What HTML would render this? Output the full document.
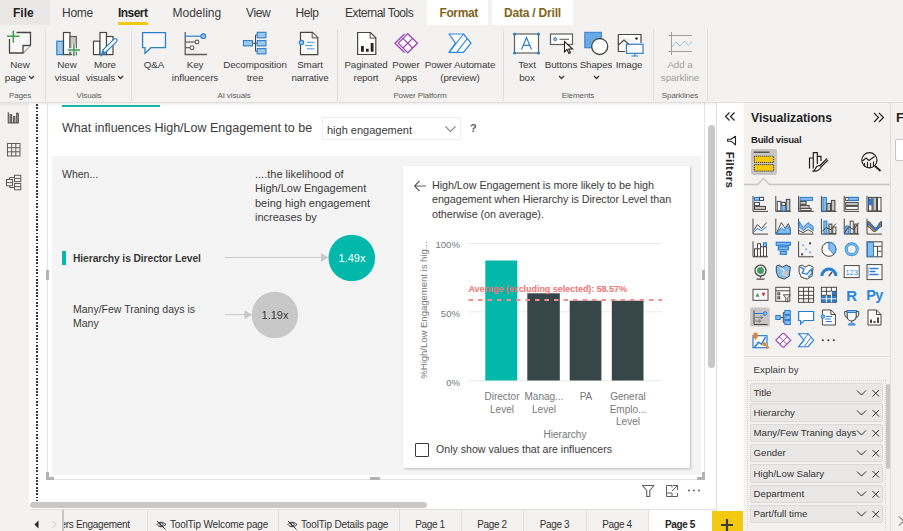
<!DOCTYPE html>
<html><head><meta charset="utf-8">
<style>
*{box-sizing:border-box;margin:0;padding:0}
html,body{width:903px;height:531px;overflow:hidden;background:#f3f2f1;font-family:"Liberation Sans",sans-serif;color:#252423;position:relative}
.a{position:absolute}
.t{position:absolute;white-space:nowrap}
.tab{position:absolute;top:0;height:25px;line-height:26px;font-size:12px;color:#3b3a39;white-space:nowrap}
.rb{position:absolute;font-size:9.8px;letter-spacing:-0.1px;color:#3b3a39;text-align:center;line-height:13px;white-space:nowrap}
.chev{display:inline-block;width:7px;height:5px;margin-left:2px;vertical-align:1px}
.gl{position:absolute;top:91.3px;font-size:8.1px;letter-spacing:-0.15px;color:#605e5c;text-align:center;white-space:nowrap}
.sep{position:absolute;top:29px;width:1px;height:72px;background:#e1dfdd}
</style></head><body>
<!-- tab row -->
<div class="a" style="left:0;top:0;width:50px;height:25px;background:#e9e8e6"></div>
<div class="tab" style="left:13px;color:#252423;font-weight:bold">File</div>
<div class="tab" style="left:62px;letter-spacing:-0.25px">Home</div>
<div class="tab" style="left:118px;color:#252423;font-weight:bold;letter-spacing:-0.55px">Insert</div>
<div class="a" style="left:118px;top:22px;width:30px;height:2.5px;background:#f2c811"></div>
<div class="tab" style="left:172.5px">Modeling</div>
<div class="tab" style="left:246px;letter-spacing:-0.4px">View</div>
<div class="tab" style="left:295.5px;letter-spacing:-0.4px">Help</div>
<div class="tab" style="left:345px;letter-spacing:-0.5px">External Tools</div>
<div class="a" style="left:427px;top:0;width:61px;height:25px;background:#fff"></div>
<div class="tab" style="left:439.5px;color:#7f6520;font-weight:bold;letter-spacing:-0.4px">Format</div>
<div class="a" style="left:492px;top:0;width:81px;height:25px;background:#fff"></div>
<div class="tab" style="left:504px;color:#7f6520;font-weight:bold;letter-spacing:-0.2px">Data / Drill</div>

<svg class="a" style="left:0;top:0" width="903" height="103" viewBox="0 0 903 103">
<g fill="none" stroke-linejoin="miter">
<!-- new page -->
<path d="M16.5 32.5H30.5V45L23 53H9.5V39" fill="#f8f8f8" stroke="#484644" stroke-width="1.3"/>
<path d="M23 53V45.5H30.5" fill="#fff" stroke="#484644" stroke-width="1.3"/>
<path d="M7 36.3H19.5M13.3 30.5V42.5" stroke="#f3f2f1" stroke-width="3.5"/><path d="M7 36.3H19.5M13.3 30.5V42.5" stroke="#3f9c5b" stroke-width="1.5"/>
<!-- new visual -->
<rect x="56.8" y="41.2" width="6.5" height="13.4" fill="#9fc8ef" stroke="#2d7fc9" stroke-width="1.2"/>
<rect x="63.5" y="32.5" width="6.5" height="22.1" fill="#fff" stroke="#484644" stroke-width="1.2"/>
<rect x="70" y="36.5" width="6.3" height="18.1" fill="#c8c6c4" stroke="#605e5c" stroke-width="1.2"/>
<path d="M67.7 49.9H80M73.9 43.8V56" stroke="#f3f2f1" stroke-width="3.5"/><path d="M67.7 49.9H80M73.9 43.8V56" stroke="#3f9c5b" stroke-width="1.5"/>
<!-- more visuals -->
<rect x="93.5" y="41.2" width="6.5" height="13.4" fill="#fff" stroke="#484644" stroke-width="1.2"/>
<rect x="100" y="32.5" width="6.5" height="22.1" fill="#fff" stroke="#484644" stroke-width="1.2"/>
<rect x="106.5" y="36.5" width="6.5" height="18.1" fill="#fff" stroke="#484644" stroke-width="1.2"/>
<path d="M101.5 55.5L102.8 50L114 39.2A1.5 1.5 0 0 1 116.6 41.6L105.5 52.5Z" fill="#fff" stroke="#2d7fc9" stroke-width="1.2"/>
<path d="M101.5 55.5L102.8 50L105.5 52.5Z" fill="#2d7fc9"/>
<!-- Q&A -->
<path d="M142.6 32.7H165.5V47.7H151L145 53.3V47.7H142.6Z" fill="#f8f8f8" stroke="#2d7fc9" stroke-width="1.3"/>
<!-- key influencers -->
<path d="M185.2 32V54.5H207" stroke="#605e5c" stroke-width="1.3"/>
<path d="M185.2 36.2H201" stroke="#2d7fc9" stroke-width="1.2"/>
<circle cx="203.3" cy="36.2" r="2.3" fill="#9fc8ef" stroke="#2d7fc9" stroke-width="1.2"/>
<path d="M185.2 42H195" stroke="#605e5c" stroke-width="1.2"/>
<circle cx="197" cy="42" r="1.9" fill="#fff" stroke="#605e5c" stroke-width="1.1"/>
<path d="M185.2 47.7H190" stroke="#605e5c" stroke-width="1.2"/>
<circle cx="192" cy="47.7" r="1.9" fill="#fff" stroke="#605e5c" stroke-width="1.1"/>
<!-- decomposition -->
<path d="M252.7 43.2H257M255.5 35V51.2H257M255.5 35H257" stroke="#484644" stroke-width="1"/>
<rect x="243.5" y="40.6" width="9" height="5.3" fill="#9fc8ef" stroke="#2d7fc9" stroke-width="1.1"/>
<rect x="257.2" y="32.3" width="8.7" height="5.5" fill="#9fc8ef" stroke="#2d7fc9" stroke-width="1.1"/>
<rect x="257.2" y="40.6" width="8.7" height="5.3" fill="#9fc8ef" stroke="#2d7fc9" stroke-width="1.1"/>
<rect x="257.2" y="48.6" width="8.7" height="5.3" fill="#9fc8ef" stroke="#2d7fc9" stroke-width="1.1"/>
<!-- smart narrative -->
<path d="M300.5 32.3H312.5L317.8 37.6V54.6H300.5Z" fill="#f8f8f8" stroke="#484644" stroke-width="1.2"/>
<path d="M312.2 32.5V37.9H317.6" fill="#fff" stroke="#484644" stroke-width="1"/>
<circle cx="301.5" cy="42.6" r="2.2" fill="#9fc8ef" stroke="#2d7fc9" stroke-width="1.1"/>
<path d="M307 42.3H314.5M305 45.6H312.5M307 48.8H314.5" stroke="#4a9be0" stroke-width="1"/>
<!-- paginated -->
<path d="M357.6 32.5H370.5L375.8 37.8V54.5H357.6Z" fill="#fff" stroke="#484644" stroke-width="1.2"/>
<path d="M370.2 32.7V38.1H375.6" stroke="#484644" stroke-width="1"/>
<path d="M361 46H363.8V51.8H361ZM365.9 48.8H368.7V51.8H365.9ZM370.7 43H373.5V51.8H370.7Z" fill="#252423"/>
<!-- power apps -->
<path d="M404.5 34L395 43.2L404.5 52.5" fill="none" stroke="#9b3fb5" stroke-width="1.2" stroke-linejoin="round"/>
<path d="M398.3 43.2L407.8 33.7L417.5 43.2L407.8 52.8Z" fill="#fbfbfb" stroke="#9b3fb5" stroke-width="1.2" stroke-linejoin="round"/>
<path d="M403 38.4L412.6 48M412.6 38.4L403 48" stroke="#9b3fb5" stroke-width="1.1"/>
<!-- power automate -->
<path d="M449 34H463.5L471 43.2L463.5 52.4H449L455.5 43.2Z" fill="#fbfbfb" stroke="#2b88d8" stroke-width="1.2" stroke-linejoin="round"/>
<path d="M463.5 34L449.3 52.2M467.3 38.5L456.8 52.2" stroke="#2b88d8" stroke-width="1.1"/>
<!-- text box -->
<rect x="514.5" y="34" width="24" height="19" fill="#fff" stroke="#605e5c" stroke-width="1.2"/>
<circle cx="514.5" cy="34" r="1.6" fill="#2d7fc9"/><circle cx="538.5" cy="34" r="1.6" fill="#2d7fc9"/>
<circle cx="514.5" cy="53" r="1.6" fill="#2d7fc9"/><circle cx="538.5" cy="53" r="1.6" fill="#2d7fc9"/>
<path d="M521.5 49.5L526.5 37.5L531.5 49.5M523.3 45.3H529.7" stroke="#2d7fc9" stroke-width="1.2"/>
<!-- buttons -->
<rect x="550.5" y="34" width="22" height="10.5" fill="#fff" stroke="#605e5c" stroke-width="1.2"/>
<circle cx="555.2" cy="39.2" r="1.5" fill="#9fc8ef" stroke="#2d7fc9" stroke-width="1"/>
<path d="M559.5 39.3H569" stroke="#605e5c" stroke-width="1.1"/>
<path d="M564.5 41.5V52L567 49.5L569 53.5L570.5 52.8L568.7 49H572.5Z" fill="#fff" stroke="#252423" stroke-width="1.1"/>
<!-- shapes -->
<rect x="584.8" y="32.3" width="16.5" height="15.5" fill="#6aa9e4" stroke="#2d7fc9" stroke-width="1"/>
<circle cx="599.7" cy="46.5" r="8" fill="#fff" stroke="#484644" stroke-width="1.3"/>
<!-- image -->
<path d="M618.3 34.5H641V43M625 51.5H618.3V34.5" fill="#fff" stroke="#484644" stroke-width="1.2"/>
<path d="M618.5 45L624 40L629 44.5" stroke="#484644" stroke-width="1.1"/>
<circle cx="636.5" cy="38.5" r="1.2" fill="#252423"/>
<rect x="626.5" y="44.3" width="16.5" height="9" fill="#fff" stroke="#2d7fc9" stroke-width="1.2"/>
<path d="M634.8 53.3V56M631.5 56H638" stroke="#2d7fc9" stroke-width="1.1"/>
<!-- sparkline -->
<path d="M671.5 32V55M668.5 35.5H692M668.5 51.5H692" stroke="#a19f9d" stroke-width="1"/>
<path d="M672 47L676 42L680 46L684.5 41L688.5 45.5L692 41" stroke="#9cc2e5" stroke-width="1"/>
</g>
</svg>

<!-- ribbon separators -->
<div class="sep" style="left:45px"></div>
<div class="sep" style="left:131px"></div>
<div class="sep" style="left:337px"></div>
<div class="sep" style="left:503px"></div>
<div class="sep" style="left:653px"></div>
<div class="sep" style="left:707px"></div>
<div class="a" style="left:0;top:102px;width:903px;height:1px;background:#e1dfdd"></div>

<!-- ribbon labels -->
<div class="rb" style="left:0;width:40px;top:58.2px">New<br>page<svg class="chev" viewBox="0 0 7 5"><path d="M1 1L3.5 3.5L6 1" fill="none" stroke="#3b3a39" stroke-width="1.3"/></svg></div>
<div class="rb" style="left:47px;width:40px;top:58.2px">New<br>visual</div>
<div class="rb" style="left:84px;width:42px;top:58.2px">More<br>visuals<svg class="chev" viewBox="0 0 7 5"><path d="M1 1L3.5 3.5L6 1" fill="none" stroke="#3b3a39" stroke-width="1.3"/></svg></div>
<div class="rb" style="left:134px;width:40px;top:58.2px">Q&amp;A</div>
<div class="rb" style="left:165px;width:60px;top:58.2px">Key<br>influencers</div>
<div class="rb" style="left:220px;width:70px;top:58.2px">Decomposition<br>tree</div>
<div class="rb" style="left:285px;width:50px;top:58.2px">Smart<br>narrative</div>
<div class="rb" style="left:341px;width:50px;top:58.2px">Paginated<br>report</div>
<div class="rb" style="left:386px;width:40px;top:58.2px">Power<br>Apps</div>
<div class="rb" style="left:420px;width:80px;top:58.2px">Power Automate<br>(preview)</div>
<div class="rb" style="left:507px;width:40px;top:58.2px">Text<br>box</div>
<div class="rb" style="left:541px;width:40px;top:58.2px">Buttons<br><svg class="chev" style="margin:0" viewBox="0 0 7 5"><path d="M1 1L3.5 3.5L6 1" fill="none" stroke="#3b3a39" stroke-width="1.3"/></svg></div>
<div class="rb" style="left:576px;width:40px;top:58.2px">Shapes<br><svg class="chev" style="margin:0" viewBox="0 0 7 5"><path d="M1 1L3.5 3.5L6 1" fill="none" stroke="#3b3a39" stroke-width="1.3"/></svg></div>
<div class="rb" style="left:609px;width:40px;top:58.2px">Image</div>
<div class="rb" style="left:655px;width:50px;top:58.2px;color:#a19f9d">Add a<br>sparkline</div>

<div class="gl" style="left:0;width:40px">Pages</div>
<div class="gl" style="left:47px;width:84px">Visuals</div>
<div class="gl" style="left:131px;width:206px">AI visuals</div>
<div class="gl" style="left:337px;width:166px">Power Platform</div>
<div class="gl" style="left:503px;width:150px">Elements</div>
<div class="gl" style="left:653px;width:54px">Sparklines</div>

<!-- canvas area -->
<div class="a" style="left:29px;top:103px;width:687px;height:406px;background:#fff"></div>
<div class="a" style="left:36px;top:104px;width:2px;height:397px;background:repeating-linear-gradient(to bottom,#3b3a39 0,#3b3a39 1.8px,transparent 1.8px,transparent 3.3px)"></div>
<div class="a" style="left:47px;top:103px;width:658px;height:377px;border:1px solid #e3e3e3;border-top:none"></div>
<div class="a" style="left:62px;top:105px;width:98px;height:2px;background:#14b8a6"></div>
<div class="t" style="left:62px;top:120.5px;font-size:12.5px;color:#3b3a39">What influences High/Low Engagement to be</div>
<div class="a" style="left:322px;top:116.5px;width:139px;height:23px;border:1px solid #ededed;background:#fff"></div>
<div class="t" style="left:327px;top:123.5px;font-size:11px;color:#3b3a39">high engagement</div>
<svg class="a" style="left:443.5px;top:125px" width="14" height="9"><path d="M1.5 1.5L6.5 6.5L11.5 1.5" fill="none" stroke="#8a8886" stroke-width="1.1"/></svg>
<div class="t" style="left:470px;top:121.5px;font-size:11px;font-weight:bold;color:#605e5c">?</div>

<div class="a" style="left:51.5px;top:155.5px;width:649.5px;height:319.5px;background:#f4f4f4"></div>
<div class="t" style="left:62px;top:168px;font-size:10.5px;color:#3b3a39">When...</div>
<div class="t" style="left:255px;top:167px;font-size:11px;line-height:14.3px;color:#3b3a39">....the likelihood of<br>High/Low Engagement<br>being high engagement<br>increases by</div>
<div class="a" style="left:62px;top:251px;width:4px;height:14px;background:#01b8aa"></div>
<div class="t" style="left:73px;top:253px;font-size:10.3px;font-weight:bold;letter-spacing:-0.1px;color:#3b3a39">Hierarchy is Director Level</div>
<div class="t" style="left:73px;top:302px;font-size:10.5px;line-height:14.3px;color:#3b3a39">Many/Few Traning days is<br>Many</div>
<svg class="a" style="left:0;top:0" width="403" height="350">
<path d="M225 257.5H322" stroke="#c8c8c8" stroke-width="1"/>
<path d="M321 253L328.5 257.5L321 262Z" fill="#c8c8c8"/>
<path d="M225 314.7H245" stroke="#c8c8c8" stroke-width="1"/>
<path d="M244.5 310.2L252 314.7L244.5 319.2Z" fill="#c8c8c8"/>
<circle cx="351.8" cy="258" r="23.3" fill="#01b8aa"/>
<circle cx="274.9" cy="315" r="23.2" fill="#c8c8c8"/>
</svg>
<div class="t" style="left:328px;top:252px;width:48px;text-align:center;font-size:11px;color:#fff">1.49x</div>
<div class="t" style="left:251px;top:309px;width:48px;text-align:center;font-size:11px;color:#3b3a39">1.19x</div>

<!-- tooltip card -->
<div class="a" style="left:403px;top:166px;width:286.5px;height:301.5px;background:#fff;box-shadow:0.5px 0.5px 2px rgba(0,0,0,.25)"></div>
<svg class="a" style="left:413px;top:180px" width="14" height="12"><path d="M13 6H1.5M6.5 1L1.5 6L6.5 11" fill="none" stroke="#605e5c" stroke-width="1.1"/></svg>
<div class="t" style="left:432px;top:178px;font-size:10.8px;letter-spacing:-0.07px;line-height:14.3px;color:#3b3a39">High/Low Engagement is more likely to be high<br>engagement when Hierarchy is Director Level than<br>otherwise (on average).</div>
<svg class="a" style="left:403px;top:166px" width="288" height="302">
<g transform="translate(-403,-166)">
<path d="M468 243.5H662M468 311.8H662M468 380.7H662" stroke="#eaeaea" stroke-width="1"/>
<rect x="485.3" y="260.5" width="32" height="120" fill="#01b8aa"/>
<rect x="527.3" y="293.3" width="32.5" height="87.2" fill="#374649"/>
<rect x="569.7" y="300.7" width="31.7" height="79.8" fill="#374649"/>
<rect x="611.8" y="300.7" width="31.7" height="79.8" fill="#374649"/>
<path d="M468.5 300H662" stroke="#f58d8d" stroke-width="2.2" stroke-dasharray="4.5 5"/>
</g>
</svg>
<div class="t" style="left:468.5px;top:284px;font-size:9px;font-weight:bold;letter-spacing:-0.05px;color:#f37373">Average (excluding selected): 58.57%</div>
<div class="t" style="left:420px;top:239px;width:40px;text-align:right;font-size:9.6px;color:#777">100%</div>
<div class="t" style="left:420px;top:307.5px;width:40px;text-align:right;font-size:9.6px;color:#777">50%</div>
<div class="t" style="left:420px;top:376.5px;width:40px;text-align:right;font-size:9.6px;color:#777">0%</div>
<div class="t" style="left:423px;top:310px;font-size:9.5px;color:#777;transform:translate(-50%,-50%) rotate(-90deg)">%High/Low Engagement is hig...</div>
<div class="t" style="left:482px;top:391px;width:40px;text-align:center;font-size:10px;line-height:12.5px;color:#777">Director<br>Level</div>
<div class="t" style="left:523px;top:391px;width:42px;text-align:center;font-size:10px;line-height:12.5px;color:#777">Manag...<br>Level</div>
<div class="t" style="left:566px;top:391px;width:40px;text-align:center;font-size:10px;line-height:12.5px;color:#777">PA</div>
<div class="t" style="left:607px;top:391px;width:42px;text-align:center;font-size:10px;line-height:12.5px;color:#777">General<br>Emplo...<br>Level</div>
<div class="t" style="left:525px;top:429px;width:80px;text-align:center;font-size:10px;color:#777">Hierarchy</div>
<div class="a" style="left:414.5px;top:443px;width:14px;height:14px;border:1.5px solid #3b3a39;border-radius:1px;background:#fff"></div>
<div class="t" style="left:436px;top:443px;font-size:10.6px;color:#3b3a39">Only show values that are influencers</div>

<!-- visual border handles -->
<div class="a" style="left:46px;top:472px;width:8px;height:8px;border-left:3px solid #b3b3b3;border-bottom:3px solid #b3b3b3"></div>
<div class="a" style="left:697px;top:472px;width:8px;height:8px;border-right:3px solid #b3b3b3;border-bottom:3px solid #b3b3b3"></div>
<div class="a" style="left:370px;top:477px;width:10px;height:3px;background:#b3b3b3"></div>
<div class="a" style="left:702px;top:270px;width:3px;height:10px;background:#b3b3b3"></div>
<div class="a" style="left:46px;top:270px;width:3px;height:10px;background:#b3b3b3"></div>
<!-- visual header icons -->
<svg class="a" style="left:638px;top:482px" width="70" height="18">
<path d="M4.5 3.5H16L11.8 8.5V14.5H8.7V8.5Z" fill="none" stroke="#605e5c" stroke-width="1.1" stroke-linejoin="round"/>
<path d="M34 5.5V3.5H28.5V14.5H39.5V11M35 3.5H39.5V8M39.5 3.5L34 9M28.5 11H34V14.5" fill="none" stroke="#605e5c" stroke-width="1"/>
<circle cx="51" cy="8.5" r="1" fill="#605e5c"/><circle cx="56" cy="8.5" r="1" fill="#605e5c"/><circle cx="61" cy="8.5" r="1" fill="#605e5c"/>
</svg>

<!-- canvas scrollbars -->
<div class="a" style="left:708px;top:125px;width:7px;height:243px;border-radius:3.5px;background:#c8c8c8"></div>
<div class="a" style="left:30px;top:502px;width:397px;height:6px;border-radius:3px;background:#c8c8c8"></div>

<div class="a" style="left:0;top:102.5px;width:903px;height:3px;background:linear-gradient(rgba(0,0,0,.07),rgba(0,0,0,0))"></div>
<!-- left sidebar icons -->
<svg class="a" style="left:0;top:103px" width="29" height="100">
<g fill="none" stroke="#605e5c" stroke-width="1">
<path d="M8.3 9.2V19.8H18.8" stroke-width="1.2"/>
<rect x="10" y="11.5" width="1.6" height="8" fill="#8a8886"/>
<rect x="13.3" y="13.5" width="1.6" height="6" fill="#8a8886"/>
<rect x="16.6" y="10.2" width="1.8" height="9.3" fill="#8a8886"/>
<rect x="7.5" y="40.5" width="12.5" height="12.5"/>
<path d="M7.5 44.7H20M7.5 48.8H20M11.7 40.5V53M15.8 40.5V53"/>
<rect x="14.5" y="72.3" width="6.3" height="6.3"/><path d="M14.5 75.4H20.8"/>
<rect x="14.5" y="80.5" width="6.3" height="6.3"/><path d="M14.5 83.6H20.8"/>
<rect x="6.5" y="76.5" width="6" height="6.3"/><path d="M6.5 79.6H12.5"/>
<path d="M9.5 76.5V74.5H14.5M9.5 82.8V84.5H14.5"/>
</g>
</svg>

<!-- filters pane -->
<div class="a" style="left:716px;top:103px;width:1px;height:428px;background:#e1dfdd"></div>
<div class="a" style="left:717px;top:103px;width:26px;height:428px;background:#fff"></div>
<svg class="a" style="left:717px;top:103px" width="26" height="50">
<path d="M12.5 9.5L8.5 13.5L12.5 17.5M17.5 9.5L13.5 13.5L17.5 17.5" fill="none" stroke="#252423" stroke-width="1.2"/>
<path d="M18.5 33.2L14 36.3H10.6V38.2H14L18.5 41.9Z" fill="none" stroke="#252423" stroke-width="1.1" stroke-linejoin="round"/>
</svg>
<div class="t" style="left:730px;top:170px;font-size:11.5px;font-weight:bold;color:#252423;letter-spacing:0.3px;transform:translate(-50%,-50%) rotate(90deg)">Filters</div>

<!-- visualizations pane -->
<div class="a" style="left:743px;top:103px;width:147px;height:428px;background:#f3f2f1;border-left:1px solid #fafafa"></div>
<div class="t" style="left:751px;top:111px;font-size:12.2px;font-weight:bold;color:#252423">Visualizations</div>
<svg class="a" style="left:870px;top:110px" width="18" height="16"><path d="M4 3L8.5 7.5L4 12M9 3L13.5 7.5L9 12" fill="none" stroke="#252423" stroke-width="1.2"/></svg>
<div class="t" style="left:751px;top:133.5px;font-size:9.6px;font-weight:bold;letter-spacing:-0.3px;color:#252423">Build visual</div>
<div class="a" style="left:751px;top:148.5px;width:25.5px;height:26px;background:#c8c6c4;border-radius:2px"></div>
<svg class="a" style="left:744px;top:144px" width="146" height="44">
<path d="M9.8 8.2H25.5" stroke="#3b3a39" stroke-width="1.2"/>
<rect x="10.3" y="12.2" width="19.3" height="6.3" fill="#f2c811" stroke="#252423" stroke-width="1" stroke-dasharray="1 1"/>
<rect x="10.3" y="20.6" width="19.3" height="6.5" fill="#f2c811" stroke="#252423" stroke-width="1" stroke-dasharray="1 1"/>
<path d="M0 40.5H13.5L19.5 34.5L25.5 40.5H146" fill="none" stroke="#c8c6c4" stroke-width="1.3"/>
<g fill="none" stroke="#252423" stroke-width="1.2">
<path d="M65.5 24.5V14H69.3V24.5M69.3 14V8.7H73.3V20M73.3 12.3H77V17"/>
<path d="M83 14.5L76 21.5M84 16L77.5 22.5" stroke-width="1.1"/>
<path d="M76 21.5C73 21.5 72 23 71.5 24.5C71 26 70 26.5 69 27C71.5 27.5 75 27 77.5 22.5Z" fill="#fff" stroke-width="1.1"/>
<circle cx="125.4" cy="16.3" r="7.6"/>
<path d="M118.5 17L122 14L125 16.5L130.5 12.5" stroke-width="1.1"/>
<path d="M120.5 19V22.5M123.5 18V23.7M126.5 19V23.7M129.5 17.5V22.5" stroke-width="1.1"/>
<path d="M131 22L136.5 27" stroke-width="1.8"/>
</g>
</svg>

<!--ICONS--><svg class="a" style="left:0;top:0" width="903" height="360" viewBox="0 0 903 360"><rect x="750.2" y="307.5" width="19.5" height="19" fill="#c8c6c4" rx="1.5"/><g transform="translate(752.5,195.9)"><path d="M0.5 0V15.5H15.5" fill="none" stroke="#484644" stroke-width="1" /><rect x="2" y="1.5" width="9" height="3" fill="#86bdf0" stroke="#2b7cd3" stroke-width="1"/><rect x="7" y="1.5" width="4" height="3" fill="#ffffff" stroke="#484644" stroke-width="1"/><rect x="2" y="6.5" width="5" height="3" fill="#ffffff" stroke="#484644" stroke-width="1"/><rect x="2" y="10.5" width="11" height="3" fill="#c8c6c4" stroke="#484644" stroke-width="1"/></g><g transform="translate(775.3,195.9)"><path d="M0.5 0V15.5H15.5" fill="none" stroke="#484644" stroke-width="1" /><rect x="2" y="5.5" width="3.5" height="9.5" fill="#ffffff" stroke="#484644" stroke-width="1"/><rect x="6.5" y="6.5" width="3.5" height="8.5" fill="#86bdf0" stroke="#2b7cd3" stroke-width="1"/><rect x="6.5" y="6.5" width="3.5" height="3" fill="#ffffff" stroke="#484644" stroke-width="1"/><rect x="11" y="3.5" width="3.5" height="11.5" fill="#c8c6c4" stroke="#484644" stroke-width="1"/></g><g transform="translate(798.1,195.9)"><path d="M0.5 0V15.5H15.5" fill="none" stroke="#484644" stroke-width="1" /><rect x="2" y="1.5" width="12.5" height="3" fill="#86bdf0" stroke="#2b7cd3" stroke-width="1"/><rect x="2" y="5.5" width="6" height="3" fill="#c8c6c4" stroke="#484644" stroke-width="1"/><rect x="2" y="9.5" width="9" height="3" fill="#c8c6c4" stroke="#484644" stroke-width="1"/><rect x="2" y="12.5" width="11" height="2" fill="#ffffff" stroke="#484644" stroke-width="1"/></g><g transform="translate(820.9,195.9)"><path d="M0.5 0V15.5H15.5" fill="none" stroke="#484644" stroke-width="1" /><rect x="2" y="1.5" width="3.5" height="13.5" fill="#86bdf0" stroke="#2b7cd3" stroke-width="1"/><rect x="6" y="7.5" width="3.5" height="7.5" fill="#c8c6c4" stroke="#484644" stroke-width="1"/><rect x="10.5" y="4.5" width="3.5" height="10.5" fill="#c8c6c4" stroke="#484644" stroke-width="1"/></g><g transform="translate(843.7,195.9)"><path d="M0.5 0V15.5H15.5" fill="none" stroke="#484644" stroke-width="1" /><rect x="2" y="1.5" width="12.5" height="3" fill="#ffffff" stroke="#484644" stroke-width="1"/><rect x="5" y="1.5" width="9.5" height="3" fill="#86bdf0" stroke="#2b7cd3" stroke-width="1"/><rect x="2" y="6.5" width="12.5" height="3" fill="#c8c6c4" stroke="#484644" stroke-width="1"/><rect x="2" y="10.5" width="12.5" height="3" fill="#ffffff" stroke="#484644" stroke-width="1"/></g><g transform="translate(866.5,195.9)"><path d="M0.5 0V15.5H15.5" fill="none" stroke="#484644" stroke-width="1" /><rect x="2" y="1.5" width="3.5" height="13.5" fill="#ffffff" stroke="#484644" stroke-width="1"/><rect x="2.5" y="3" width="2.5" height="6" fill="#2b7cd3" stroke="#2b7cd3" stroke-width="1"/><rect x="6.5" y="1.5" width="3.5" height="13.5" fill="#c8c6c4" stroke="#484644" stroke-width="1"/><rect x="11" y="1.5" width="3.5" height="13.5" fill="#ffffff" stroke="#484644" stroke-width="1"/></g><g transform="translate(752.5,218.6)"><path d="M0.5 0V15.5H15.5" fill="none" stroke="#484644" stroke-width="1" /><path d="M1 12L5 6L9 10L14 4" fill="none" stroke="#484644" stroke-width="1" /><path d="M1 14L5 10L9 12L14 8" fill="none" stroke="#2b7cd3" stroke-width="1" /></g><g transform="translate(775.3,218.6)"><path d="M0.5 0V15.5H15.5" fill="none" stroke="#484644" stroke-width="1" /><path d="M1 15L6 4L10 10L13 5L15 10V15Z" fill="#ffffff" stroke="#484644" stroke-width="1" /><path d="M1 15L6 9L9 12L12 7L15 12V15Z" fill="#86bdf0" stroke="#2b7cd3" stroke-width="1" /></g><g transform="translate(798.1,218.6)"><path d="M0.5 0V15.5H15.5" fill="none" stroke="#484644" stroke-width="1" /><path d="M1 3L5 9L10 4L15 8V12L10 8L5 12L1 8Z" fill="#86bdf0" stroke="#2b7cd3" stroke-width="1" /><path d="M1 12L5 14L10 11L15 14" fill="none" stroke="#484644" stroke-width="1" /></g><g transform="translate(820.9,218.6)"><path d="M0.5 0V15.5H15.5" fill="none" stroke="#484644" stroke-width="1" /><rect x="3" y="2.5" width="3" height="12.5" fill="#86bdf0" stroke="#2b7cd3" stroke-width="1"/><rect x="8" y="5.5" width="3" height="9.5" fill="#c8c6c4" stroke="#484644" stroke-width="1"/><rect x="12" y="8.5" width="3" height="6.5" fill="#ffffff" stroke="#484644" stroke-width="1"/><path d="M1 13L5 9L10 11L15 5" fill="none" stroke="#484644" stroke-width="1" /></g><g transform="translate(843.7,218.6)"><path d="M0.5 0V15.5H15.5" fill="none" stroke="#484644" stroke-width="1" /><rect x="2" y="7.5" width="3" height="7.5" fill="#86bdf0" stroke="#2b7cd3" stroke-width="1"/><rect x="6.5" y="2.5" width="3" height="12.5" fill="#ffffff" stroke="#484644" stroke-width="1"/><rect x="11" y="5.5" width="3" height="9.5" fill="#c8c6c4" stroke="#484644" stroke-width="1"/><path d="M1 14L5 8L10 11L15 4" fill="none" stroke="#484644" stroke-width="1" /></g><g transform="translate(866.5,218.6)"><path d="M0.5 0V15.5H15.5" fill="none" stroke="#484644" stroke-width="1" /><path d="M1 3C5 3 6 9 9 9S12 3 15 3V8C12 8 11 13 8 13S4 8 1 8Z" fill="#e8832a" stroke="#484644" stroke-width="1" /><path d="M1 5C5 5 6 11 9 11S12 5 15 5" fill="none" stroke="#2b7cd3" stroke-width="2" /></g><g transform="translate(752.5,241.3)"><path d="M0.5 0V15.5H15.5" fill="none" stroke="#484644" stroke-width="1" /><rect x="2" y="7.5" width="3" height="7.5" fill="#ffffff" stroke="#484644" stroke-width="1"/><rect x="5" y="2.5" width="3" height="5" fill="#ffffff" stroke="#484644" stroke-width="1"/><rect x="8" y="5.5" width="3" height="9.5" fill="#ffffff" stroke="#484644" stroke-width="1"/><rect x="11" y="1.5" width="3" height="4" fill="#86bdf0" stroke="#2b7cd3" stroke-width="1"/><rect x="11" y="5.5" width="3" height="9.5" fill="#ffffff" stroke="#484644" stroke-width="1"/></g><g transform="translate(775.3,241.3)"><rect x="1" y="1" width="14" height="3" fill="#86bdf0" stroke="#2b7cd3" stroke-width="1.2"/><rect x="3" y="5.5" width="10" height="3" fill="#86bdf0" stroke="#2b7cd3" stroke-width="1.2"/><rect x="5" y="10" width="6" height="3" fill="#86bdf0" stroke="#2b7cd3" stroke-width="1.2"/></g><g transform="translate(798.1,241.3)"><path d="M0.5 0V15.5H15.5" fill="none" stroke="#484644" stroke-width="1" /><rect x="4" y="3" width="2" height="2" fill="#86bdf0" stroke="none" stroke-width="1"/><rect x="11" y="1" width="2" height="2" fill="#484644" stroke="none" stroke-width="1"/><rect x="7" y="7" width="2" height="2" fill="#86bdf0" stroke="none" stroke-width="1"/><rect x="3" y="12" width="2" height="2" fill="#484644" stroke="none" stroke-width="1"/><rect x="11" y="10" width="2" height="2" fill="#86bdf0" stroke="none" stroke-width="1"/></g><g transform="translate(820.9,241.3)"><circle cx="8" cy="8" r="7" fill="#fff" stroke="#3b3a39" stroke-width="1"/><path d="M8 1A7 7 0 0 1 13 13L8 8Z" fill="#86bdf0" stroke="#2b7cd3" stroke-width="1" /></g><g transform="translate(843.7,241.3)"><circle cx="8" cy="8" r="5.5" fill="none" stroke="#2b88d8" stroke-width="3"/><circle cx="8" cy="8" r="5.5" fill="none" stroke="#7ab8ea" stroke-width="1.6"/></g><g transform="translate(866.5,241.3)"><rect x="0.5" y="0.5" width="15" height="15" fill="#ffffff" stroke="#484644" stroke-width="1"/><rect x="1" y="1" width="6" height="14" fill="#86bdf0" stroke="#2b7cd3" stroke-width="1"/><path d="M7 5H15M11 5V15M11 10H15" fill="none" stroke="#484644" stroke-width="1" /></g><g transform="translate(752.5,264.1)"><circle cx="8" cy="6.5" r="5.5" fill="#fff" stroke="#3b3a39" stroke-width="1.2"/><circle cx="8" cy="6.5" r="3.5" fill="#3f9c5b"/><path d="M8 12V14M4 15H12" fill="none" stroke="#484644" stroke-width="1.2" /></g><g transform="translate(775.3,264.1)"><path d="M1 2L4 1L7 3L11 1L15 3L14 12L9 15L3 13L1 8Z" fill="#86bdf0" stroke="#484644" stroke-width="1" /><path d="M5 4L9 6L7 10L12 12" fill="none" stroke="#ffffff" stroke-width="1" /><path d="M8 7L13 7L12 11L8 12Z" fill="#c8c6c4" stroke="none" stroke-width="1" /></g><g transform="translate(798.1,264.1)"><path d="M1 2L4 1L7 3L11 1L15 3L14 12L9 15L3 13L1 8Z" fill="#ffffff" stroke="#484644" stroke-width="1" /><path d="M2 3L6 5L4 9L9 10L13 5L14 9L10 13" fill="none" stroke="#2b7cd3" stroke-width="1.3" /></g><g transform="translate(820.9,264.1)"><path d="M1 12A7 7 0 0 1 15 12" fill="none" stroke="#2b7cd3" stroke-width="3" /><path d="M8 12L11 8" fill="none" stroke="#484644" stroke-width="1.5" /></g><g transform="translate(843.7,264.1)"><rect x="0.5" y="1.5" width="15" height="12" fill="#ffffff" stroke="#484644" stroke-width="1"/><text x="8" y="11" font-size="7.5" font-family="Liberation Sans" fill="#2b88d8" text-anchor="middle">123</text></g><g transform="translate(866.5,264.1)"><rect x="0.5" y="0.5" width="15" height="15" fill="#ffffff" stroke="#484644" stroke-width="1"/><path d="M3 4.5H12M3 7.5H9M3 10.5H12" fill="none" stroke="#2b7cd3" stroke-width="1.5" /><path d="M2 3V13" fill="none" stroke="#c8c6c4" stroke-width="1" /></g><g transform="translate(752.5,286.8)"><rect x="0.5" y="2.5" width="15" height="11" fill="#ffffff" stroke="#484644" stroke-width="1"/><path d="M3 10L5 6L7 10Z" fill="#3f9c5b" stroke="none" stroke-width="1" /><path d="M9 6H13L11 10Z" fill="#d13438" stroke="none" stroke-width="1" /></g><g transform="translate(775.3,286.8)"><rect x="0.5" y="0.5" width="14" height="14" fill="#ffffff" stroke="#484644" stroke-width="1"/><path d="M0.5 4H14.5" fill="none" stroke="#484644" stroke-width="1" /><rect x="2.5" y="6" width="2" height="2" fill="#ffffff" stroke="#484644" stroke-width="1"/><rect x="2.5" y="10" width="2" height="2" fill="#ffffff" stroke="#484644" stroke-width="1"/><path d="M8 8H15L12.5 11V15H10.5V11Z" fill="#ffffff" stroke="#484644" stroke-width="1" /></g><g transform="translate(798.1,286.8)"><rect x="0.5" y="0.5" width="15" height="15" fill="#ffffff" stroke="#484644" stroke-width="1"/><path d="M0.5 4.5H15.5M0.5 8.5H15.5M0.5 12H15.5M5.5 0.5V15.5M10.5 0.5V15.5" fill="none" stroke="#484644" stroke-width="1" /></g><g transform="translate(820.9,286.8)"><rect x="0.5" y="0.5" width="15" height="15" fill="#ffffff" stroke="#484644" stroke-width="1"/><rect x="0.5" y="8.5" width="15" height="7" fill="#2b7cd3" stroke="none" stroke-width="1"/><rect x="10.5" y="4.5" width="5" height="4" fill="#2b7cd3" stroke="none" stroke-width="1"/><path d="M0.5 4.5H15.5M0.5 8.5H15.5M0.5 12H15.5M5.5 0.5V15.5M10.5 0.5V15.5" fill="none" stroke="#484644" stroke-width="1" /><path d="M0.5 12H15.5M5.5 8.5V15.5M10.5 4.5V15.5" fill="none" stroke="#ffffff" stroke-width="1" /></g><g transform="translate(843.7,286.8)"><text x="8" y="14" font-size="15" font-weight="bold" font-family="Liberation Sans" fill="#2b88d8" text-anchor="middle">R</text></g><g transform="translate(866.5,286.8)"><text x="8" y="13.5" font-size="14.5" font-weight="bold" font-family="Liberation Sans" fill="#2b88d8" text-anchor="middle" letter-spacing="-0.5">Py</text></g><g transform="translate(752.5,309.5)"><path d="M1.5 1V15H15" fill="none" stroke="#484644" stroke-width="1" /><path d="M1.5 4H11" fill="none" stroke="#2b7cd3" stroke-width="1" /><circle cx="12.5" cy="4" r="1.8" fill="#86bdf0" stroke="#2b7cd3"/><path d="M1.5 8H9.5M1.5 11.5H7.5" fill="none" stroke="#8a8886" stroke-width="1" /><path d="M8.5 6.5L10.5 8L8.5 9.5ZM6.5 10L8.5 11.5L6.5 13Z" fill="#8a8886" stroke="#8a8886" stroke-width="1" /></g><g transform="translate(775.3,309.5)"><path d="M5 8H8M8 3V13H9.5M8 3H9.5" fill="none" stroke="#484644" stroke-width="1" /><rect x="0.5" y="6" width="4.5" height="4" fill="#86bdf0" stroke="#2b7cd3" stroke-width="1"/><rect x="9.5" y="1" width="5.5" height="4" fill="#86bdf0" stroke="#2b7cd3" stroke-width="1"/><rect x="9.5" y="6" width="5.5" height="4" fill="#86bdf0" stroke="#2b7cd3" stroke-width="1"/><rect x="9.5" y="11" width="5.5" height="4" fill="#86bdf0" stroke="#2b7cd3" stroke-width="1"/></g><g transform="translate(798.1,309.5)"><path d="M0.5 2H15.5V11H6L2.5 14.5V11H0.5Z" fill="#ffffff" stroke="#2b7cd3" stroke-width="1.2" /></g><g transform="translate(820.9,309.5)"><path d="M1.5 0.5H10L14.5 5V15.5H1.5Z" fill="#ffffff" stroke="#484644" stroke-width="1" /><path d="M10 0.5V5H14.5" fill="none" stroke="#484644" stroke-width="1" /><circle cx="2" cy="7" r="1.8" fill="#7ab8ea" stroke="#2b88d8"/><path d="M5 7H11M4 9.5H10M5 12H11" fill="none" stroke="#2b7cd3" stroke-width="1" /></g><g transform="translate(843.7,309.5)"><path d="M3.5 1H12.5V7A4.5 4.5 0 0 1 3.5 7Z" fill="#ffffff" stroke="#484644" stroke-width="1.1" /><rect x="3.5" y="1" width="9" height="2" fill="#86bdf0" stroke="#2b7cd3" stroke-width="1"/><path d="M3.5 2H1V5A3 3 0 0 0 4 8M12.5 2H15V5A3 3 0 0 1 12 8" fill="none" stroke="#484644" stroke-width="1" /><path d="M8 11.5V13" fill="none" stroke="#484644" stroke-width="1" /><path d="M4.5 15.5C4.5 13 11.5 13 11.5 15.5Z" fill="#86bdf0" stroke="#2b7cd3" stroke-width="1" /></g><g transform="translate(866.5,309.5)"><path d="M1.5 0.5H10L14.5 5V15.5H1.5Z" fill="#ffffff" stroke="#484644" stroke-width="1" /><path d="M10 0.5V5H14.5" fill="none" stroke="#484644" stroke-width="1" /><path d="M3.5 13.5V10H5.5V13.5M7 13.5V11.5H9V13.5M10.5 13.5V8H12.5V13.5" fill="#484644" stroke="none" stroke-width="1" /></g><g transform="translate(752.5,332.2)"><rect x="0.5" y="3.5" width="14" height="12" fill="#ffffff" stroke="#2b7cd3" stroke-width="1.2"/><path d="M2 15L6 10L9 12L13 5" fill="none" stroke="#2b7cd3" stroke-width="1.5" /><path d="M1 0.5H5V5L3 8L1 5Z" fill="#e8832a" stroke="none" stroke-width="1" /><circle cx="12" cy="12" r="2" fill="#e8832a"/><circle cx="15" cy="15" r="1.5" fill="#e8832a"/></g><g transform="translate(775.3,332.2)"><path d="M4.5 8L8 4.5L11.5 8L8 11.5Z" fill="none" stroke="#9b3fb5" stroke-width="1" /><path d="M0.5 8L7 1.5A1.3 1.3 0 0 1 9 1.5L15.5 8L9 14.5A1.3 1.3 0 0 1 7 14.5Z" fill="#ffffff" stroke="#9b3fb5" stroke-width="1.1" /><path d="M4 4.5L11.5 12M12 4.5L4.5 12" fill="none" stroke="#9b3fb5" stroke-width="1" /></g><g transform="translate(798.1,332.2)"><path d="M0.5 1.5H10L15.5 8L10 14.5H0.5L6 8Z" fill="#ffffff" stroke="#2b7cd3" stroke-width="1.1" /><path d="M10 1.5L1 14M13 5L6.5 14" fill="none" stroke="#2b7cd3" stroke-width="1" /></g><g transform="translate(820.9,332.2)"><circle cx="2" cy="8" r="1" fill="#3b3a39"/><circle cx="7.5" cy="8" r="1" fill="#3b3a39"/><circle cx="13" cy="8" r="1" fill="#3b3a39"/></g></svg><!--/ICONS-->
<!-- fields strip -->
<div class="a" style="left:889.5px;top:103px;width:1px;height:428px;background:#e1dfdd"></div>
<div class="a" style="left:890.5px;top:103px;width:13px;height:428px;background:#f3f2f1"></div>
<div class="t" style="left:896px;top:110px;font-size:13px;font-weight:bold;color:#252423">F</div>
<div class="a" style="left:894.5px;top:138.5px;width:20px;height:22px;border:1px solid #c8c6c4;border-radius:2px;background:#fff"></div>

<!-- explain by -->
<div class="a" style="left:744px;top:356px;width:146px;height:1px;background:#e1dfdd"></div>
<div class="t" style="left:753.5px;top:364px;font-size:9.8px;color:#3b3a39">Explain by</div>
<div class="a" style="left:747px;top:380px;width:139px;height:160px;border:1px dotted #d6d4d2;border-bottom:none"></div>
<div class="a" style="left:886px;top:384px;width:4px;height:85px;background:#c8c6c4;border-radius:2px"></div>

<!-- wells -->
<div class="a" style="left:749.5px;top:383.0px;width:133px;height:18.5px;background:#e9e8e7;border:1px solid #dcdad8;border-radius:2px"></div>
<div class="t" style="left:753.5px;top:386.5px;font-size:9.7px;color:#323130">Title</div>
<svg class="a" style="left:856px;top:388.5px" width="26" height="9"><path d="M1 1.5L5.5 6L10 1.5" fill="none" stroke="#323130" stroke-width="1"/><path d="M16.5 1L23 7.5M23 1L16.5 7.5" stroke="#323130" stroke-width="1"/></svg>
<div class="a" style="left:749.5px;top:403.3px;width:133px;height:18.5px;background:#e9e8e7;border:1px solid #dcdad8;border-radius:2px"></div>
<div class="t" style="left:753.5px;top:406.8px;font-size:9.7px;color:#323130">Hierarchy</div>
<svg class="a" style="left:856px;top:408.8px" width="26" height="9"><path d="M1 1.5L5.5 6L10 1.5" fill="none" stroke="#323130" stroke-width="1"/><path d="M16.5 1L23 7.5M23 1L16.5 7.5" stroke="#323130" stroke-width="1"/></svg>
<div class="a" style="left:749.5px;top:423.6px;width:133px;height:18.5px;background:#e9e8e7;border:1px solid #dcdad8;border-radius:2px"></div>
<div class="t" style="left:753.5px;top:427.1px;font-size:9.7px;color:#323130">Many/Few Traning days</div>
<svg class="a" style="left:856px;top:429.1px" width="26" height="9"><path d="M1 1.5L5.5 6L10 1.5" fill="none" stroke="#323130" stroke-width="1"/><path d="M16.5 1L23 7.5M23 1L16.5 7.5" stroke="#323130" stroke-width="1"/></svg>
<div class="a" style="left:749.5px;top:443.9px;width:133px;height:18.5px;background:#e9e8e7;border:1px solid #dcdad8;border-radius:2px"></div>
<div class="t" style="left:753.5px;top:447.4px;font-size:9.7px;color:#323130">Gender</div>
<svg class="a" style="left:856px;top:449.4px" width="26" height="9"><path d="M1 1.5L5.5 6L10 1.5" fill="none" stroke="#323130" stroke-width="1"/><path d="M16.5 1L23 7.5M23 1L16.5 7.5" stroke="#323130" stroke-width="1"/></svg>
<div class="a" style="left:749.5px;top:464.2px;width:133px;height:18.5px;background:#e9e8e7;border:1px solid #dcdad8;border-radius:2px"></div>
<div class="t" style="left:753.5px;top:467.7px;font-size:9.7px;color:#323130">High/Low Salary</div>
<svg class="a" style="left:856px;top:469.7px" width="26" height="9"><path d="M1 1.5L5.5 6L10 1.5" fill="none" stroke="#323130" stroke-width="1"/><path d="M16.5 1L23 7.5M23 1L16.5 7.5" stroke="#323130" stroke-width="1"/></svg>
<div class="a" style="left:749.5px;top:484.5px;width:133px;height:18.5px;background:#e9e8e7;border:1px solid #dcdad8;border-radius:2px"></div>
<div class="t" style="left:753.5px;top:488.0px;font-size:9.7px;color:#323130">Department</div>
<svg class="a" style="left:856px;top:490.0px" width="26" height="9"><path d="M1 1.5L5.5 6L10 1.5" fill="none" stroke="#323130" stroke-width="1"/><path d="M16.5 1L23 7.5M23 1L16.5 7.5" stroke="#323130" stroke-width="1"/></svg>
<div class="a" style="left:749.5px;top:504.8px;width:133px;height:18.5px;background:#e9e8e7;border:1px solid #dcdad8;border-radius:2px"></div>
<div class="t" style="left:753.5px;top:508.3px;font-size:9.7px;color:#323130">Part/full time</div>
<svg class="a" style="left:856px;top:510.3px" width="26" height="9"><path d="M1 1.5L5.5 6L10 1.5" fill="none" stroke="#323130" stroke-width="1"/><path d="M16.5 1L23 7.5M23 1L16.5 7.5" stroke="#323130" stroke-width="1"/></svg>
<svg class="a" style="left:895px;top:512px" width="8" height="19"><path d="M4 4.5L13 13.5M13 4.5L4 13.5" stroke="#484644" stroke-width="1"/></svg>
<!-- page tabs -->
<div class="a" style="left:29px;top:509px;width:687px;height:1px;background:#e1dfdd"></div>
<div class="a" style="left:29px;top:510px;width:687px;height:21px;background:#f3f2f1"></div>
<div class="a" style="left:648px;top:510px;width:64px;height:21px;background:#fff"></div>
<div class="a" style="left:711.5px;top:511px;width:31.5px;height:20px;background:#f2c811"></div>

<svg class="a" style="left:29px;top:510px" width="40" height="21"><path d="M5.5 14.5L9.5 10.5V18.5Z" fill="#252423"/><path d="M23.5 11L27 14.5L23.5 18" fill="none" stroke="#c8c6c4" stroke-width="1"/></svg>
<div class="a" style="left:62px;top:510px;width:1.5px;height:21px;background:#c8c6c4"></div>
<div class="t" style="left:63.5px;top:518.5px;font-size:10px;letter-spacing:-0.3px;color:#323130;overflow:hidden;width:80px"><span style="margin-left:-3px">ers Engagement</span></div>
<div class="a" style="left:146.5px;top:510px;width:1px;height:21px;background:#e1dfdd"></div>
<div class="t" style="left:170px;top:518.5px;font-size:10px;letter-spacing:-0.15px;color:#323130">ToolTip Welcome page</div>
<div class="a" style="left:278px;top:510px;width:1px;height:21px;background:#e1dfdd"></div>
<div class="t" style="left:301px;top:518.5px;font-size:10px;letter-spacing:-0.15px;color:#323130">ToolTip Details page</div>
<div class="a" style="left:398.5px;top:510px;width:1px;height:21px;background:#e1dfdd"></div>
<div class="t" style="left:399px;width:62px;text-align:center;top:518.5px;font-size:10px;letter-spacing:-0.35px;color:#323130">Page 1</div>
<div class="a" style="left:461px;top:510px;width:1px;height:21px;background:#e1dfdd"></div>
<div class="t" style="left:461px;width:62px;text-align:center;top:518.5px;font-size:10px;letter-spacing:-0.35px;color:#323130">Page 2</div>
<div class="a" style="left:523px;top:510px;width:1px;height:21px;background:#e1dfdd"></div>
<div class="t" style="left:523px;width:63px;text-align:center;top:518.5px;font-size:10px;letter-spacing:-0.35px;color:#323130">Page 3</div>
<div class="a" style="left:585.5px;top:510px;width:1px;height:21px;background:#e1dfdd"></div>
<div class="t" style="left:586px;width:62px;text-align:center;top:518.5px;font-size:10px;letter-spacing:-0.35px;color:#323130">Page 4</div>
<div class="a" style="left:647.5px;top:510px;width:1px;height:21px;background:#e1dfdd"></div>
<div class="t" style="left:648px;width:64px;text-align:center;top:518.5px;font-size:10px;font-weight:bold;letter-spacing:-0.35px;color:#252423">Page 5</div>
<svg class="a" style="left:150px;top:513px" width="260" height="18">
<g fill="none" stroke="#3b3a39" stroke-width="1">
<path d="M7 11.5C9 8.5 13 8.5 16 11.5C13 14.5 9 14.5 7 11.5Z"/><circle cx="11.5" cy="11.5" r="1.6"/><path d="M7 8L15.5 16.5"/>
<path d="M138 11.5C140 8.5 144 8.5 147 11.5C144 14.5 140 14.5 138 11.5Z"/><circle cx="142.5" cy="11.5" r="1.6"/><path d="M138 8L146.5 16.5"/>
</g></svg>
<svg class="a" style="left:711px;top:511px" width="32" height="20"><path d="M16 8V20M10 14H22" stroke="#3b3a39" stroke-width="2.2"/></svg>
</body></html>
